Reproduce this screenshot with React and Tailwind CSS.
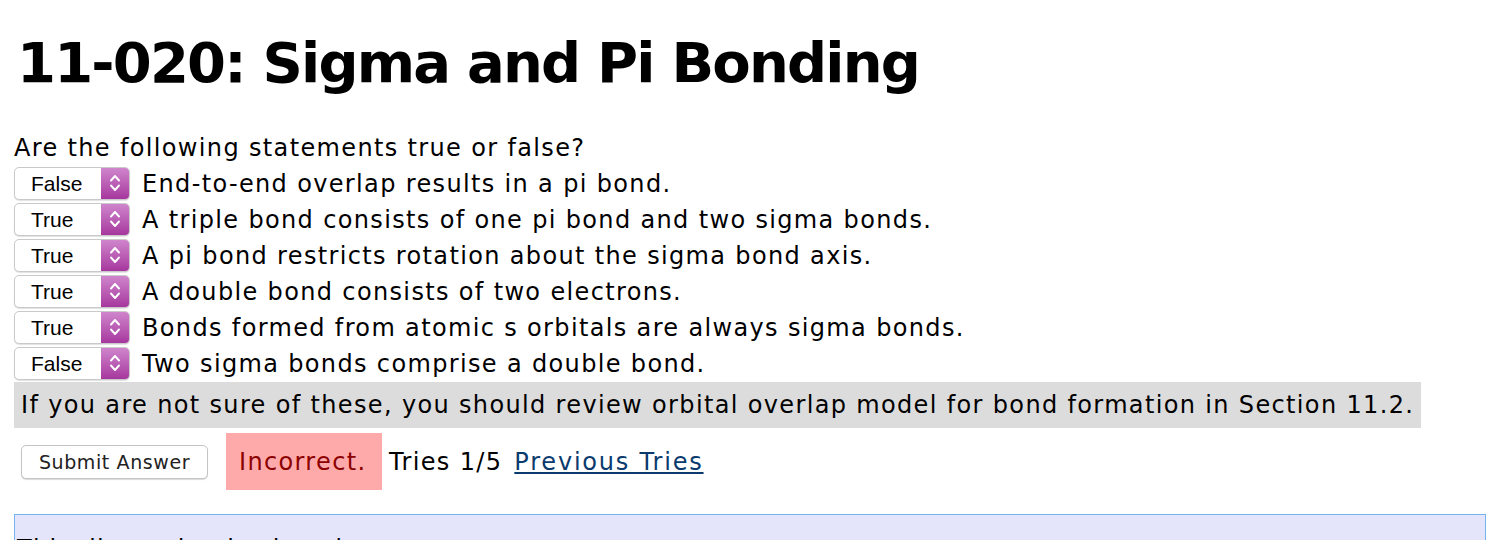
import React from "react";

const rows = [
  ["False", "End-to-end overlap results in a pi bond."],
  ["True", "A triple bond consists of one pi bond and two sigma bonds."],
  ["True", "A pi bond restricts rotation about the sigma bond axis."],
  ["True", "A double bond consists of two electrons."],
  ["True", "Bonds formed from atomic s orbitals are always sigma bonds."],
  ["False", "Two sigma bonds comprise a double bond."],
];

function Select({ value }) {
  return (
    <div className="flex h-[33px] w-[116px] shrink-0 rounded-[5px] border border-[#c9c9c9] bg-white shadow-[0_1px_1px_rgba(0,0,0,0.12)] overflow-hidden">
      <div className="flex-1 flex items-center pl-[16px] pt-[1px] text-[21px] tracking-normal text-black font-['Liberation_Sans',sans-serif]">
        {value}
      </div>
      <div className="w-[28px] flex items-center justify-center bg-gradient-to-b from-[#cf85cc] to-[#a6369e]">
        <svg width="14" height="22" viewBox="0 0 14 22" fill="none" stroke="white" strokeWidth="1.9" strokeLinecap="round" strokeLinejoin="round">
          <path d="M3 8.5 L7 4 L11 8.5" />
          <path d="M3 13.5 L7 18 L11 13.5" />
        </svg>
      </div>
    </div>
  );
}

export default function App() {
  return (
    <div className="pl-[14px] bg-white text-black font-['DejaVu_Sans',sans-serif] text-[24px] leading-[28px] tracking-[1.35px] overflow-hidden">
      <h1 className="mt-[30px] text-[56px] leading-[66px] font-bold tracking-[-1.8px] pl-[3px]">
        11-020: Sigma and Pi Bonding
      </h1>
      <div className="mt-[38px]">Are the following statements true or false?</div>
      <div className="mt-[3px]">
        {rows.map(([v, t], i) => (
          <div key={i} className="flex items-center h-[36px] gap-[12px]">
            <Select value={v} />
            <span className="pt-[2px]">{t}</span>
          </div>
        ))}
      </div>
      <div className="mt-[1px] w-fit bg-[#dcdcdc] px-[7px] py-[9px] whitespace-nowrap">
        If you are not sure of these, you should review orbital overlap model for bond formation in Section 11.2.
      </div>
      <div className="mt-[5px] flex items-center">
        <button className="ml-[7px] h-[34px] w-[187px] rounded-[5px] border border-[#c4c4c4] bg-white text-[19px] tracking-[0.6px] text-[#222] font-['DejaVu_Sans',sans-serif] shadow-[0_1px_1px_rgba(0,0,0,0.15)]">
          Submit Answer
        </button>
        <div className="ml-[18px] h-[57px] w-[156px] flex items-center bg-[#ffaaaa] pl-[13px] text-[#8b0000]">
          Incorrect.
        </div>
        <span className="ml-[7px]">Tries 1/5</span>
        <a href="#" className="ml-[12px] text-[#0a3a6e] underline tracking-[1.8px]">Previous Tries</a>
      </div>
      <div className="mt-[24px] border border-[#74b2f2] bg-[#e4e4fa] pt-[20px] pb-[20px] pl-[2px]">
        This discussion is closed.
      </div>
    </div>
  );
}
